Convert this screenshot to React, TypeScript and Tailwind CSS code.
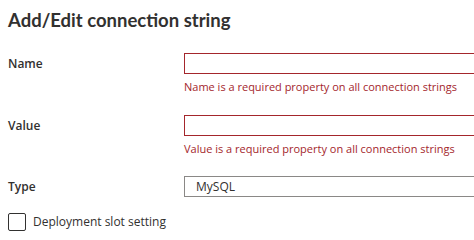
const font = { fontFamily: '"Open Sans", "Noto Sans", sans-serif' };

function Field({ label, error, children }: { label: string; error?: string; children: React.ReactNode }) {
  return (
    <div className="flex flex-col">
      <div className="flex items-center">
        <label className="w-[176px] shrink-0 text-[12px] font-semibold text-[#323130]">{label}</label>
        <div className="flex-1 min-w-0 -mr-[10px]">{children}</div>
      </div>
      {error && (
        <p className="ml-[176px] mt-[5px] text-[11px] leading-[16px] text-[#a4262c] whitespace-nowrap">{error}</p>
      )}
    </div>
  );
}

export default function App() {
  return (
    <div className="w-[474px] h-[240px] overflow-hidden bg-white pl-2" style={font}>
      <h1
        className="pt-[7px] text-[18.5px] leading-[27px] font-bold text-[#323130]"
        style={{ fontFamily: 'Lato, "Open Sans", sans-serif' }}
      >
        Add/Edit connection string
      </h1>

      <div className="mt-[19px] flex flex-col">
        <Field label="Name" error="Name is a required property on all connection strings">
          <input className="block w-full h-[21px] border border-[#a4262c] outline-none" />
        </Field>

        <div className="mt-[20px]">
          <Field label="Value" error="Value is a required property on all connection strings">
            <input className="block w-full h-[21px] border border-[#a4262c] outline-none" />
          </Field>
        </div>

        <div className="mt-[19px]">
          <Field label="Type">
            <div className="h-[21px] border border-[#8a8886] pl-[11px] flex items-center text-[12px] text-[#323130]">MySQL</div>
          </Field>
        </div>

        <div className="mt-[16px] flex items-center gap-[7px]">
          <span className="w-[18px] h-[18px] border border-[#323130] rounded-[2px]" />
          <span className="text-[12px] text-[#323130]">Deployment slot setting</span>
        </div>
      </div>
    </div>
  );
}
